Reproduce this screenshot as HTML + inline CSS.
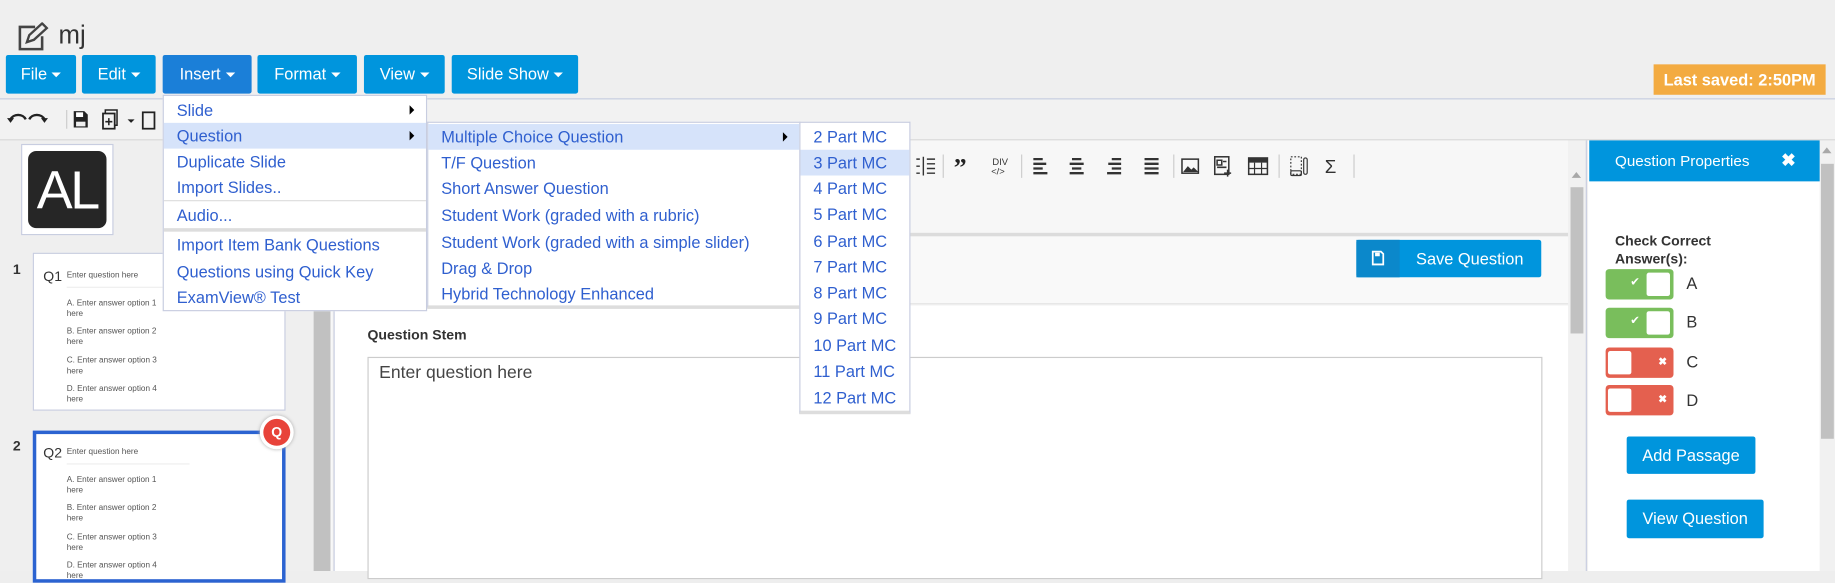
<!DOCTYPE html>
<html><head><meta charset="utf-8"><style>
*{box-sizing:border-box;margin:0;padding:0}
html,body{width:1835px;height:571px;overflow:hidden;background:#eeeeee;font-family:"Liberation Sans",sans-serif}
#w{position:absolute;left:0;top:0;width:1568px;height:488px;transform:scale(1.17028,1.17008);transform-origin:0 0;background:#efefef}
.a{position:absolute}
.btn{position:absolute;top:47px;height:33px;background:#0095dd;color:#fff;font-size:14px;line-height:33px;text-align:center;border-radius:2px}
.car{display:inline-block;width:0;height:0;border-left:4px solid transparent;border-right:4px solid transparent;border-top:4px solid #fff;vertical-align:middle;margin-left:4px}
.menu{position:absolute;background:#fff;border:1px solid #c8cde0;color:#2f5fcf;font-size:14px}
.mi{position:absolute;left:0;right:0;height:22px;line-height:22px;padding-left:11px}
.hl{background:#d6e3fa}
.arr{position:absolute;right:10px;top:7px;width:0;height:0;border-top:4px solid transparent;border-bottom:4px solid transparent;border-left:4px solid #000}
.card{position:absolute;left:28px;width:216px;background:#fff;border:1px solid #c8cde0;font-size:7px;color:#555}
.card .q{position:absolute;left:8px;top:12px;font-size:12px;color:#333}
.card .qt{position:absolute;left:28px;top:15px}
.card .ln{position:absolute;left:28px;top:28px;width:105px;border-top:1px solid #eee}
.card .o{position:absolute;left:28px;line-height:9px}
.tg{position:absolute;left:1372px;width:58px;height:26px;border-radius:3px}
.tg i{position:absolute;top:3px;width:20px;height:20px;background:#fff;border-radius:2px}
</style></head><body><div id="w">
<svg class="a" style="left:14px;top:19px" width="28" height="26" viewBox="0 0 28 26"><path d="M16 4H3v19h19V12" fill="none" stroke="#444" stroke-width="2.2"/><path d="M9 17l2-6L22 1l4 4-11 10z" fill="none" stroke="#444" stroke-width="2"/></svg>
<div class="a" style="left:50px;top:17px;font-size:22px;color:#333">mj</div>
<div class="btn" style="left:5px;width:60px">File<span class="car"></span></div>
<div class="btn" style="left:70px;width:63px">Edit<span class="car"></span></div>
<div class="btn" style="left:139px;width:76px;background:#1b7fd8">Insert<span class="car"></span></div>
<div class="btn" style="left:220px;width:85px">Format<span class="car"></span></div>
<div class="btn" style="left:311px;width:69px">View<span class="car"></span></div>
<div class="btn" style="left:386px;width:108px">Slide Show<span class="car"></span></div>
<div class="a" style="left:1413px;top:55px;width:147px;height:26px;background:#f3ab41;color:#fff;font-weight:bold;font-size:14px;line-height:26px;text-align:center">Last saved: 2:50PM</div>
<div class="a" style="left:0;top:84px;width:1568px;height:1px;background:#c5cbe0"></div>
<div class="a" style="left:0;top:85px;width:1568px;height:34px;background:#f2f2f2"></div>
<div class="a" style="left:0;top:119px;width:1568px;height:1px;background:#d8d8d8"></div>
<svg class="a" style="left:6px;top:93px" width="134" height="18" viewBox="0 0 134 18"><path d="M3 9a7 6 0 0 1 13 0M19 9a7 6 0 0 1 13 0" fill="none" stroke="#222" stroke-width="2"/><path d="M0 8l3 4 3-4zM29 8l3 4 3-4z" fill="#222"/><line x1="51" y1="1" x2="51" y2="17" stroke="#ccc"/><path d="M57 2h9l3 3v11H57z" fill="#222"/><rect x="59" y="3" width="6" height="4" fill="#fff"/><rect x="59" y="11" width="8" height="4" fill="#eee"/><rect x="82" y="4" width="10" height="13" fill="none" stroke="#222" stroke-width="1.5"/><path d="M84 4V1h10v13h-2" fill="none" stroke="#222" stroke-width="1.3"/><path d="M87 8v6M84 11h6" stroke="#222" stroke-width="1.3"/><path d="M103 9l3 3 3-3z" fill="#222"/><rect x="116" y="3" width="10" height="14" fill="none" stroke="#222" stroke-width="1.5"/></svg>
<div class="a" style="left:18px;top:123px;width:79px;height:78px;background:#fff;border:1px solid #c8cde0"></div>
<div class="a" style="left:24px;top:129px;width:67px;height:66px;background:#262626;border-radius:7px;color:#fff;font-size:46px;line-height:66px;text-align:center;letter-spacing:-2px">AL</div>
<div class="a" style="left:11px;top:223px;font-size:12px;font-weight:bold;color:#333">1</div>
<div class="card" style="top:216px;height:135px"><div class="q">Q1</div><div class="qt">Enter question here</div><div class="ln"></div>
<div class="o" style="top:38px">A. Enter answer option 1<br>here</div><div class="o" style="top:62px">B. Enter answer option 2<br>here</div><div class="o" style="top:87px">C. Enter answer option 3<br>here</div><div class="o" style="top:111px">D. Enter answer option 4<br>here</div></div>
<div class="a" style="left:11px;top:374px;font-size:12px;font-weight:bold;color:#333">2</div>
<div class="card" style="top:368px;height:130px;border:3px solid #2b63d1"><div class="q" style="left:6px;top:9px">Q2</div><div class="qt" style="left:26px;top:12px">Enter question here</div><div class="ln" style="left:26px;top:25px"></div>
<div class="o" style="left:26px;top:35px">A. Enter answer option 1<br>here</div><div class="o" style="left:26px;top:59px">B. Enter answer option 2<br>here</div><div class="o" style="left:26px;top:84px">C. Enter answer option 3<br>here</div><div class="o" style="left:26px;top:108px">D. Enter answer option 4<br>here</div></div>
<div class="a" style="left:222px;top:355px;width:29px;height:29px;border-radius:50%;background:#fff;box-shadow:0 0 3px #aaa"></div>
<div class="a" style="left:225px;top:358px;width:23px;height:23px;border-radius:50%;background:#e8433a;color:#fff;font-weight:bold;font-size:12px;line-height:22px;text-align:center">Q</div>
<div class="a" style="left:268px;top:120px;width:14px;height:368px;background:#c1c1c1"></div>
<div class="a" style="left:282px;top:120px;width:2px;height:368px;background:#fff;border-left:1px solid #ddd"></div>
<div class="a" style="left:285px;top:120px;width:1055px;height:80px;background:#f7f7f7;border-left:1px solid #c8cde0"></div>
<div class="a" style="left:285px;top:199px;width:1055px;height:3px;background:#dcdcdc"></div>
<div class="a" style="left:285px;top:202px;width:1055px;height:58px;background:#f9f9f9;border-left:1px solid #c8cde0;border-bottom:1px solid #e6e6e6"></div>
<div class="a" style="left:285px;top:261px;width:1055px;height:227px;background:#fff;border-left:1px solid #c8cde0"></div>
<svg class="a" style="left:780px;top:131px" width="380" height="22" viewBox="0 0 380 22">
<g stroke="#333" stroke-width="1.2" fill="none"><path d="M3 5h3M3 11h3M3 17h3M9 3v16M12 5h7M12 9h7M12 13h7M12 17h7"/></g>
<line x1="26" y1="1" x2="26" y2="21" stroke="#ccc"/>
<text x="35" y="19" font-size="22" font-weight="bold" fill="#222" font-family="Liberation Serif">”</text>
<text x="68" y="10" font-size="8" fill="#333">DIV</text><text x="67" y="18" font-size="8" fill="#333">&lt;/&gt;</text>
<line x1="93" y1="1" x2="93" y2="21" stroke="#ccc"/>
<g stroke="#333" stroke-width="2"><path d="M103 5h8M103 9h11M103 13h8M103 17h12"/><path d="M136 5h8M134 9h12M136 13h8M134 17h12"/><path d="M170 5h8M167 9h11M170 13h8M166 17h12"/><path d="M198 5h12M198 9h12M198 13h12M198 17h12"/></g>
<line x1="223" y1="1" x2="223" y2="21" stroke="#ccc"/>
<rect x="230" y="5" width="14" height="12" fill="none" stroke="#333" stroke-width="1.3"/><path d="M231 16l4-5 3 3 2-2 4 4z" fill="#333"/>
<rect x="258" y="3" width="12" height="15" fill="none" stroke="#333" stroke-width="1.3"/><path d="M260 6h4v4h-4zM265 7h3M260 12h8M266 17h6M269 14v6" stroke="#333" stroke-width="1.3" fill="none"/>
<rect x="287" y="4" width="16" height="14" fill="none" stroke="#333" stroke-width="1.3"/><rect x="287" y="4" width="16" height="4" fill="#333"/><path d="M292 8v10M298 8v10M287 13h16" stroke="#333"/>
<line x1="313" y1="1" x2="313" y2="21" stroke="#ccc"/>
<rect x="323" y="3" width="9" height="15" fill="none" stroke="#333" stroke-dasharray="1.5 1.5"/><rect x="323" y="15" width="9" height="4" rx="1" fill="none" stroke="#333"/><rect x="334" y="4" width="3" height="14" rx="1.5" fill="none" stroke="#333"/>
<text x="352" y="17" font-size="16" fill="#333">Σ</text>
<line x1="377" y1="1" x2="377" y2="21" stroke="#ccc"/>
</svg>
<div class="a" style="left:1159px;top:205px;width:158px;height:32px;background:#0095dd;border-radius:2px;color:#fff;font-size:14px;line-height:32px"><div class="a" style="left:0;top:0;width:37px;height:32px;background:#0b88cb"></div>
<svg class="a" style="left:13px;top:9px" width="11" height="13" viewBox="0 0 11 13"><path d="M1 1h7l2 2v9H1z" fill="none" stroke="#fff" stroke-width="1.5"/><rect x="3" y="2" width="4" height="3" fill="#fff"/></svg>
<span class="a" style="left:51px">Save Question</span></div>
<div class="a" style="left:314px;top:279px;font-size:12px;font-weight:bold;color:#333">Question Stem</div>
<div class="a" style="left:314px;top:305px;width:1004px;height:190px;border:1px solid #ccc;background:#fff"></div>
<div class="a" style="left:324px;top:310px;font-size:15px;color:#444">Enter question here</div>
<div class="a" style="left:1340px;top:120px;width:16px;height:368px;background:#f1f1f1;border-right:1px solid #c8cde0"></div>
<div class="a" style="left:1342px;top:160px;width:11px;height:125px;background:#c1c1c1"></div>
<div class="a" style="left:1343px;top:147px;width:0;height:0;border-left:4px solid transparent;border-right:4px solid transparent;border-bottom:5px solid #a8a8a8"></div>
<div class="a" style="left:1357px;top:120px;width:198px;height:368px;background:#fff"></div>
<div class="a" style="left:1358px;top:120px;width:197px;height:35px;background:#0095dd;color:#fff;font-size:13px;line-height:35px;padding-left:22px">Question Properties<span class="a" style="left:164px;font-weight:bold;font-size:15px">✖</span></div>
<div class="a" style="left:1380px;top:199px;font-size:12px;font-weight:bold;color:#333;line-height:15px">Check Correct<br>Answer(s):</div>
<div class="tg" style="top:230px;background:#79be5c"><i style="left:35px"></i><span class="a" style="left:21px;top:6px;color:#fff;font-size:10px">✔</span></div>
<div class="tg" style="top:263px;background:#79be5c"><i style="left:35px"></i><span class="a" style="left:21px;top:6px;color:#fff;font-size:10px">✔</span></div>
<div class="tg" style="top:297px;background:#e4604f"><i style="left:2px"></i><span class="a" style="left:45px;top:7px;color:#fff;font-size:9px;font-weight:bold">✖</span></div>
<div class="tg" style="top:329px;background:#e4604f"><i style="left:2px"></i><span class="a" style="left:45px;top:7px;color:#fff;font-size:9px;font-weight:bold">✖</span></div>
<div class="a" style="left:1441px;top:234px;font-size:14px;color:#333">A</div>
<div class="a" style="left:1441px;top:267px;font-size:14px;color:#333">B</div>
<div class="a" style="left:1441px;top:301px;font-size:14px;color:#333">C</div>
<div class="a" style="left:1441px;top:334px;font-size:14px;color:#333">D</div>
<div class="a" style="left:1390px;top:373px;width:110px;height:32px;background:#0095dd;border-radius:2px;color:#fff;font-size:14px;line-height:32px;text-align:center">Add Passage</div>
<div class="a" style="left:1390px;top:427px;width:117px;height:33px;background:#0095dd;border-radius:2px;color:#fff;font-size:14px;line-height:33px;text-align:center">View Question</div>
<div class="a" style="left:1555px;top:120px;width:13px;height:368px;background:#f1f1f1"></div>
<div class="a" style="left:1556px;top:140px;width:11px;height:235px;background:#c1c1c1"></div>
<div class="a" style="left:1557px;top:126px;width:0;height:0;border-left:4px solid transparent;border-right:4px solid transparent;border-bottom:5px solid #a8a8a8"></div>
<div class="menu" style="left:139px;top:81px;width:226px;height:185px">
<div class="mi" style="top:1px">Slide<span class="arr"></span></div>
<div class="mi hl" style="top:23px">Question<span class="arr"></span></div>
<div class="mi" style="top:45px">Duplicate Slide</div>
<div class="mi" style="top:67px">Import Slides..</div>
<div class="a" style="left:0;right:0;top:89px;height:1px;background:#ddd"></div>
<div class="mi" style="top:91px">Audio...</div>
<div class="a" style="left:0;right:0;top:113px;height:3px;background:#ddd"></div>
<div class="mi" style="top:116px">Import Item Bank Questions</div>
<div class="mi" style="top:139px">Questions using Quick Key</div>
<div class="mi" style="top:161px">ExamView® Test</div>
</div>
<div class="menu" style="left:365px;top:104px;width:319px;height:160px;border-bottom:3px solid #ddd">
<div class="mi hl" style="top:1px">Multiple Choice Question<span class="arr"></span></div>
<div class="mi" style="top:23px">T/F Question</div>
<div class="mi" style="top:45px">Short Answer Question</div>
<div class="mi" style="top:68px">Student Work (graded with a rubric)</div>
<div class="mi" style="top:91px">Student Work (graded with a simple slider)</div>
<div class="mi" style="top:113px">Drag &amp; Drop</div>
<div class="mi" style="top:135px">Hybrid Technology Enhanced</div>
</div>
<div class="menu" style="left:683px;top:104px;width:95px;height:250px;border-bottom:3px solid #ddd">
<div class="mi" style="top:1px">2 Part MC</div><div class="mi hl" style="top:23px">3 Part MC</div><div class="mi" style="top:45px">4 Part MC</div><div class="mi" style="top:67px">5 Part MC</div><div class="mi" style="top:90px">6 Part MC</div><div class="mi" style="top:112px">7 Part MC</div><div class="mi" style="top:134px">8 Part MC</div><div class="mi" style="top:156px">9 Part MC</div><div class="mi" style="top:179px">10 Part MC</div><div class="mi" style="top:201px">11 Part MC</div><div class="mi" style="top:224px">12 Part MC</div>
</div>
</div></body></html>
